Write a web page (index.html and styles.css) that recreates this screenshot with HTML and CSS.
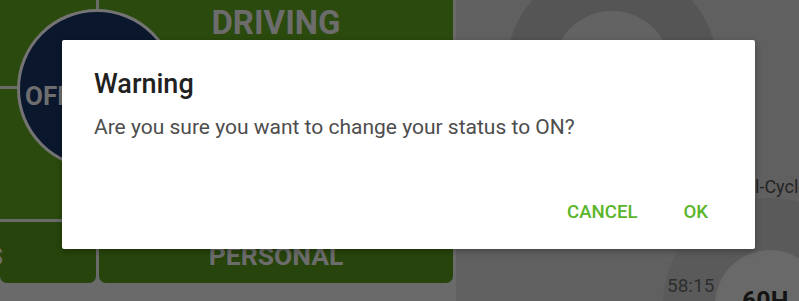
FILE: index.html
```html
<!DOCTYPE html>
<html>
<head>
<meta charset="utf-8">
<link rel="stylesheet" href="styles.css">
</head>
<body>
<div class="screen">
  <div class="left">
    <div class="panel"></div>
    <div class="panel panel-top"><span class="panel-label">DRIVING</span></div>
    <div class="panel"></div>
    <div class="panel"></div>
    <div class="panel panel-bottom panel-end"><span class="panel-label">BREAKS</span></div>
    <div class="panel panel-bottom panel-center"><span class="panel-label">PERSONAL</span></div>
    <div class="status-circle"><span class="status-label">OFF DUTY</span></div>
  </div>
  <div class="right">
    <div class="donut donut-top"><div class="donut-hole"></div></div>
    <div class="donut donut-bottom"><div class="donut-hole"></div></div>
    <span class="cycle-label">Full-Cycle</span>
    <span class="time-label">58:15</span>
    <span class="hours-label">60H</span>
  </div>
</div>
<div class="dialog">
  <div class="dialog-title">Warning</div>
  <div class="dialog-body">Are you sure you want to change your status to ON?</div>
  <div class="dialog-actions">
    <span class="dialog-btn">CANCEL</span>
    <span class="dialog-btn">OK</span>
  </div>
</div>
</body>
</html>
```
FILE: styles.css
```css
html, body {
  margin: 0;
  padding: 0;
}
body {
  width: 799px;
  height: 301px;
  overflow: hidden;
  position: relative;
  font-family: Roboto, "Liberation Sans", sans-serif;
  background: #666666;
}
.screen {
  display: flex;
  height: 301px;
}
.left {
  position: relative;
  width: 453px;
  padding-right: 3px;
  height: 301px;
  background: #6a6a6a;
  display: grid;
  grid-template-columns: 96px 354px;
  grid-template-rows: 86px 130px 61px;
  column-gap: 3px;
  row-gap: 3px;
  align-content: start;
  overflow: hidden;
}
.panel {
  background: #2b4a0e;
  display: flex;
  overflow: hidden;
}
.panel-top {
  justify-content: center;
  align-items: flex-start;
  padding-top: 3px;
}
.panel-bottom {
  background: #27440c;
  border-radius: 0 0 7px 7px;
  align-items: center;
  padding-top: 6px;
}
.panel-center {
  justify-content: center;
}
.panel-end {
  justify-content: flex-end;
  padding-right: 93px;
  overflow: hidden;
}
.panel-label {
  font-weight: 700;
  color: #6c6c6c;
  font-size: 26.5px;
  white-space: nowrap;
}
.panel-top .panel-label {
  font-size: 33px;
}
.status-circle {
  position: absolute;
  left: 17px;
  top: 9px;
  width: 160px;
  height: 160px;
  border: 3px solid #747474;
  border-radius: 50%;
  background: #0b172d;
  display: flex;
  align-items: center;
  padding-left: 5px;
  padding-top: 14px;
  box-sizing: border-box;
}
.status-label {
  font-weight: 700;
  font-size: 26px;
  color: #6e6e6e;
  white-space: nowrap;
}
.right {
  position: relative;
  flex: 1;
  background: #606060;
  overflow: hidden;
}
.donut {
  position: absolute;
  border-radius: 50%;
  display: flex;
  align-items: center;
  justify-content: center;
}
.donut-hole {
  border-radius: 50%;
}
.donut-top {
  left: 50px;
  top: -36px;
  width: 212px;
  height: 212px;
  background: #555555;
}
.donut-top .donut-hole {
  width: 118px;
  height: 118px;
  background: #636363;
}
.donut-bottom {
  left: 207px;
  top: 198px;
  width: 214px;
  height: 214px;
  background: #5a5a5a;
}
.donut-bottom .donut-hole {
  width: 110px;
  height: 110px;
  background: #696969;
}
.cycle-label {
  position: absolute;
  left: 275px;
  top: 176px;
  font-size: 18px;
  color: #242424;
  white-space: nowrap;
}
.time-label {
  position: absolute;
  left: 211px;
  top: 274px;
  font-size: 19px;
  color: #2e2e2e;
}
.hours-label {
  position: absolute;
  left: 286px;
  top: 287px;
  font-size: 25px;
  font-weight: 700;
  color: #141414;
}
.dialog {
  position: absolute;
  left: 62px;
  top: 40px;
  width: 693px;
  height: 209px;
  background: #ffffff;
  border-radius: 2px;
  box-shadow: 0 2px 6px rgba(0, 0, 0, 0.3);
  display: flex;
  flex-direction: column;
  box-sizing: border-box;
  padding: 28px 47px 26px 32px;
}
.dialog-title {
  font-size: 27px;
  font-weight: 500;
  color: #212121;
}
.dialog-body {
  margin-top: 15px;
  font-size: 21px;
  color: #4d4d4d;
}
.dialog-actions {
  margin-top: auto;
  display: flex;
  justify-content: flex-end;
  gap: 46px;
}
.dialog-btn {
  font-size: 18.6px;
  font-weight: 500;
  color: #5ab52b;
}
```
